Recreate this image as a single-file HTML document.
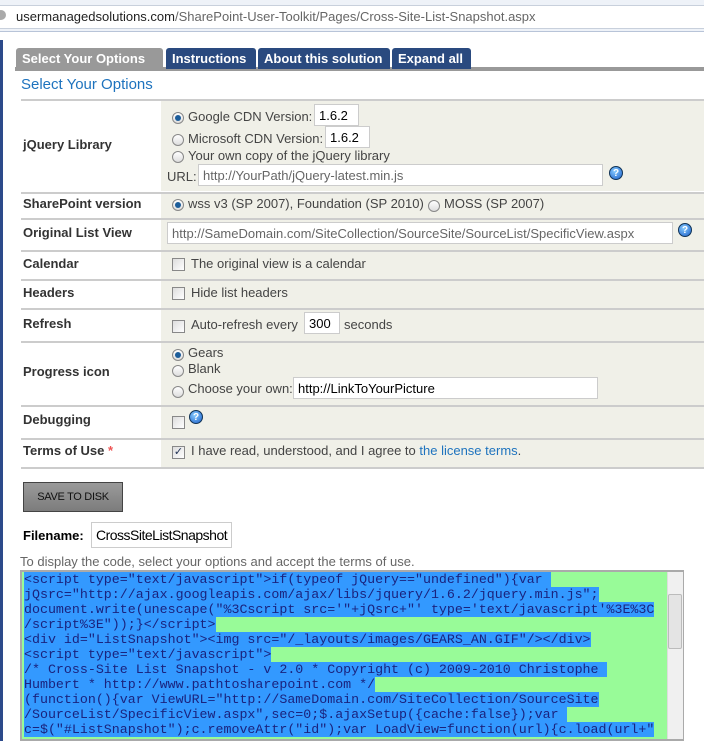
<!DOCTYPE html>
<html><head><style>
*{margin:0;padding:0;box-sizing:border-box}
body{width:704px;height:741px;overflow:hidden;background:#fff;font-family:"Liberation Sans",sans-serif;font-size:13px;color:#444;position:relative}
.a{position:absolute}
.lbl{position:absolute;left:23px;font-weight:bold;color:#333;font-size:13px}
.line{position:absolute;left:21px;right:0;height:2px;background:#ccc}
.bg{position:absolute;left:161px;right:0;background:#f0f0e8}
.rad{position:absolute;width:12px;height:12px;border-radius:50%;border:1px solid #888;background:linear-gradient(#fff,#ddd)}
.rad.on::after{content:"";position:absolute;left:2px;top:2px;width:6px;height:6px;border-radius:50%;background:#1c5d9a}
.chk{position:absolute;width:13px;height:13px;border:1px solid #888;background:linear-gradient(135deg,#ddd,#fff)}
.inp{position:absolute;height:22px;border:1px solid #ccc;background:#fff;font-size:13px;padding:3px 4px;color:#666;white-space:nowrap;overflow:hidden}
.help{position:absolute;width:14px;height:14px;border-radius:50%;background:radial-gradient(circle at 40% 35%,#8cf,#1a5dc8);color:#fff;font-size:10px;font-weight:bold;text-align:center;line-height:14px;border:1px solid #135}
.tab{position:absolute;top:48px;height:21px;background:#2a4a7f;color:#fff;font-weight:bold;font-size:13px;padding:3px 6px;border-radius:3px 3px 0 0}
pre{font-family:"Liberation Mono",monospace;font-size:13.3px;line-height:15px;color:#1a3a8a}
pre span{background:#3399ff;color:#1a237e}
</style></head><body>
<div class="a" style="left:0;top:0;width:704px;height:32px;background:#eef2f8;border-bottom:1px solid #b8c4d8"></div>
<div class="a" style="left:0;top:5px;width:704px;height:24px;background:#fff;border-top:1px solid #c8d0dc;border-bottom:1px solid #c8d0dc"></div>
<div class="a" style="left:-4px;top:10px;width:10px;height:10px;border-radius:50%;background:#aaa"></div>
<div class="a" style="left:16px;top:9px;font-size:13px;color:#222">usermanagedsolutions.com<span style="color:#666">/SharePoint-User-Toolkit/Pages/Cross-Site-List-Snapshot.aspx</span></div>
<div class="a" style="left:0;top:40px;width:3px;height:701px;background:#2c4a8a"></div>

<div class="a" style="left:15px;top:67px;right:0;height:4px;background:#999"></div>
<div class="tab" style="left:16px;width:147px;background:#999;height:23px">Select Your Options</div>
<div class="tab" style="left:166px;width:90px">Instructions</div>
<div class="tab" style="left:258px;width:132px">About this solution</div>
<div class="tab" style="left:392px;width:79px">Expand all</div>
<div class="a" style="left:21px;top:76px;font-size:15px;color:#1e73be">Select Your Options</div>

<div class="bg" style="top:101px;height:90px"></div>
<div class="bg" style="top:194px;height:24px"></div>
<div class="bg" style="top:220px;height:30px"></div>
<div class="bg" style="top:252px;height:27px"></div>
<div class="bg" style="top:281px;height:27px"></div>
<div class="bg" style="top:310px;height:31px"></div>
<div class="bg" style="top:343px;height:62px"></div>
<div class="bg" style="top:407px;height:31px"></div>
<div class="bg" style="top:440px;height:27px"></div>
<div class="line" style="top:99px"></div>
<div class="line" style="top:192px"></div>
<div class="line" style="top:218px"></div>
<div class="line" style="top:250px"></div>
<div class="line" style="top:279px"></div>
<div class="line" style="top:308px"></div>
<div class="line" style="top:341px"></div>
<div class="line" style="top:405px"></div>
<div class="line" style="top:438px"></div>
<div class="line" style="top:467px"></div>

<div class="lbl" style="top:137px">jQuery Library</div>
<div class="rad on" style="left:172px;top:112px"></div><div class="a" style="left:188px;top:109px">Google CDN Version:</div>
<div class="inp" style="left:314px;top:104px;width:45px;color:#000">1.6.2</div>
<div class="rad" style="left:172px;top:134px"></div><div class="a" style="left:188px;top:131px">Microsoft CDN Version:</div>
<div class="inp" style="left:325px;top:126px;width:45px;color:#000">1.6.2</div>
<div class="rad" style="left:172px;top:151px"></div><div class="a" style="left:188px;top:148px">Your own copy of the jQuery library</div>
<div class="a" style="left:167px;top:169px">URL:</div>
<div class="inp" style="left:198px;top:164px;width:405px">http://YourPath/jQuery-latest.min.js</div>
<div class="help" style="left:609px;top:166px">?</div>

<div class="lbl" style="top:196px">SharePoint version</div>
<div class="rad on" style="left:172px;top:199px"></div><div class="a" style="left:188px;top:196px">wss v3 (SP 2007), Foundation (SP 2010)</div>
<div class="rad" style="left:428px;top:200px"></div><div class="a" style="left:444px;top:196px">MOSS (SP 2007)</div>

<div class="lbl" style="top:225px">Original List View</div>
<div class="inp" style="left:167px;top:222px;width:506px">http://SameDomain.com/SiteCollection/SourceSite/SourceList/SpecificView.aspx</div>
<div class="help" style="left:678px;top:223px">?</div>

<div class="lbl" style="top:256px">Calendar</div>
<div class="chk" style="left:172px;top:258px"></div><div class="a" style="left:191px;top:256px">The original view is a calendar</div>
<div class="lbl" style="top:285px">Headers</div>
<div class="chk" style="left:172px;top:287px"></div><div class="a" style="left:191px;top:285px">Hide list headers</div>
<div class="lbl" style="top:316px">Refresh</div>
<div class="chk" style="left:172px;top:320px"></div><div class="a" style="left:191px;top:317px">Auto-refresh every</div>
<div class="inp" style="left:304px;top:312px;width:36px;color:#000">300</div>
<div class="a" style="left:344px;top:317px">seconds</div>

<div class="lbl" style="top:364px">Progress icon</div>
<div class="rad on" style="left:172px;top:349px"></div><div class="a" style="left:188px;top:345px">Gears</div>
<div class="rad" style="left:172px;top:365px"></div><div class="a" style="left:188px;top:361px">Blank</div>
<div class="rad" style="left:172px;top:386px"></div><div class="a" style="left:188px;top:381px">Choose your own:</div>
<div class="inp" style="left:293px;top:377px;width:305px;color:#000">http://LinkToYourPicture</div>

<div class="lbl" style="top:412px">Debugging</div>
<div class="chk" style="left:172px;top:416px"></div>
<div class="help" style="left:189px;top:410px">?</div>
<div class="lbl" style="top:443px">Terms of Use <span style="color:#e55">*</span></div>
<div class="chk" style="left:172px;top:446px;font-size:11px;line-height:11px;color:#235;text-align:center">✓</div>
<div class="a" style="left:191px;top:443px">I have read, understood, and I agree to <span style="color:#1e73be">the license terms</span>.</div>

<div class="a" style="left:23px;top:482px;width:100px;height:30px;border:1px solid #444;background:linear-gradient(#9a9a9a,#7c7c7c);color:#111;font-size:11px;text-align:center;line-height:28px;letter-spacing:-0.3px">SAVE TO DISK</div>
<div class="a" style="left:23px;top:528px;font-weight:bold;color:#000">Filename:</div>
<div class="inp" style="left:91px;top:522px;width:141px;height:26px;color:#000;font-size:14px;padding-top:4px;letter-spacing:-0.5px">CrossSiteListSnapshot</div>
<div class="a" style="left:20px;top:554px;color:#666">To display the code, select your options and accept the terms of use.</div>

<div class="a" style="left:20px;top:570px;width:664px;height:171px;border:2px solid #aaa;border-right:1px solid #aaa;background:#98fb98;overflow:hidden">
<pre class="a" style="left:2px;top:0px"><span>&lt;script type="text/javascript"&gt;if(typeof jQuery=="undefined"){var </span>
<span>jQsrc="http://ajax.googleapis.com/ajax/libs/jquery/1.6.2/jquery.min.js";</span>
<span>document.write(unescape("%3Cscript src='"+jQsrc+"' type='text/javascript'%3E%3C</span>
<span>/script%3E"));}&lt;/script&gt;</span>
<span>&lt;div id="ListSnapshot"&gt;&lt;img src="/_layouts/images/GEARS_AN.GIF"/&gt;&lt;/div&gt;</span>
<span>&lt;script type="text/javascript"&gt;</span>
<span>/* Cross-Site List Snapshot - v 2.0 * Copyright (c) 2009-2010 Christophe </span>
<span>Humbert * http://www.pathtosharepoint.com */</span>
<span>(function(){var ViewURL="http://SameDomain.com/SiteCollection/SourceSite</span>
<span>/SourceList/SpecificView.aspx",sec=0;$.ajaxSetup({cache:false});var </span>
<span>c=$("#ListSnapshot");c.removeAttr("id");var LoadView=function(url){c.load(url+"</span></pre>
<div class="a" style="right:0;top:0;width:16px;height:171px;background:#f0f0f0;border-left:1px solid #ddd"></div>
<div class="a" style="right:1px;top:22px;width:14px;height:55px;background:#e4e4e4;border:1px solid #bbb;border-radius:2px"></div>
</div>
</body></html>
